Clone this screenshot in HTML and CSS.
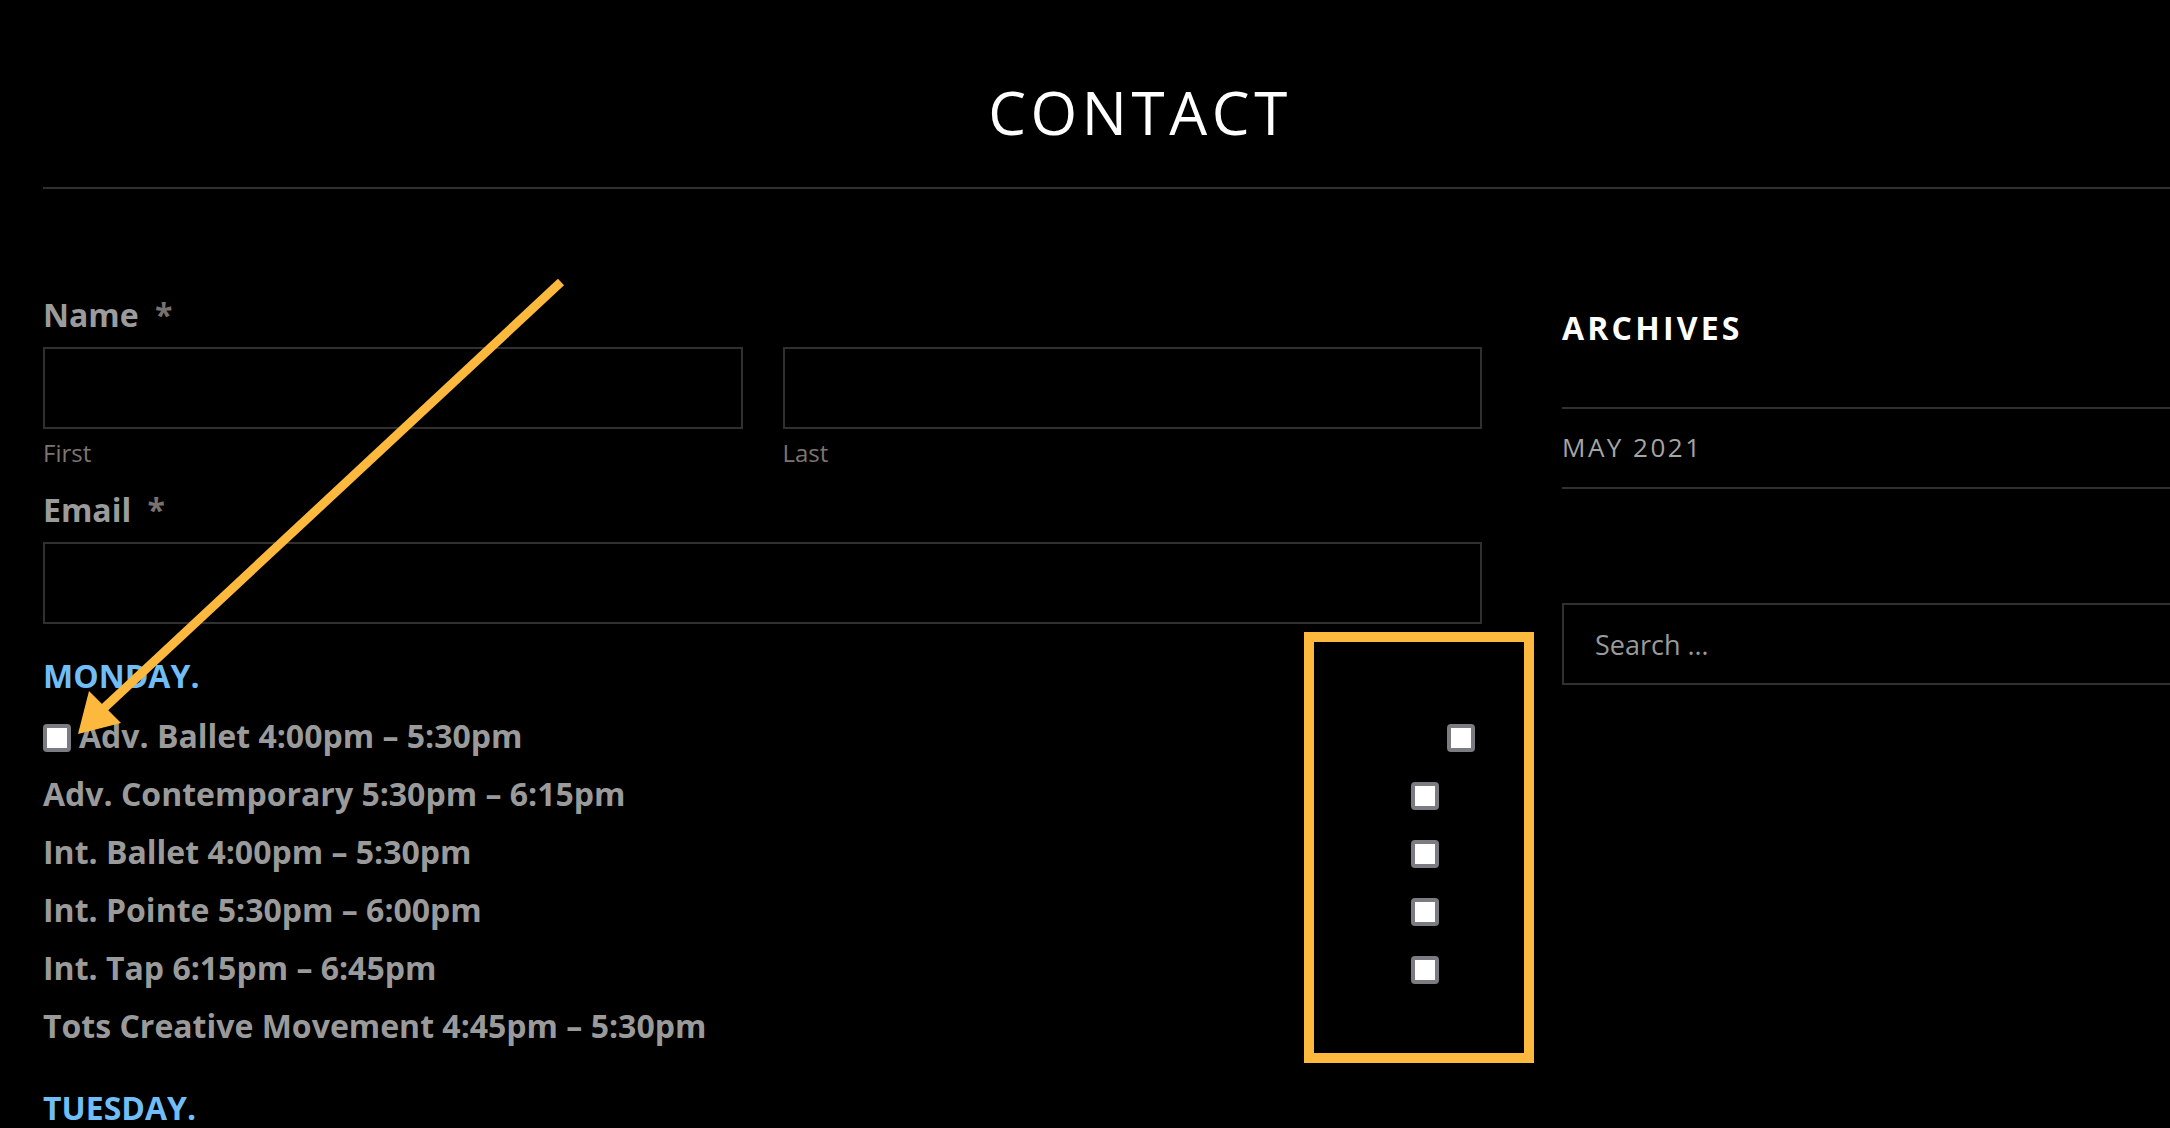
FILE: index.html
```html
<!DOCTYPE html>
<html lang="en">

<head>
    <meta http-equiv="Content-Type" content="text/html; charset=UTF-8" />
    <meta name="viewport" content="width=device-width, initial-scale=1.0">
    <title>Contact</title>
    <link rel="stylesheet" href="styles.css">
</head>

<body>
    <div class="site-page">
        <header class="entry-header">
            <h1 class="entry-title">Contact</h1>
        </header>

        <div class="content-area">
            <main class="primary">
                <form class="contact-form">
                    <div class="field">
                        <label class="field-label">Name <span class="required">*</span></label>
                        <div class="name-row">
                            <div class="name-part">
                                <input type="text" class="text-input" />
                                <span class="sublabel">First</span>
                            </div>
                            <div class="name-part">
                                <input type="text" class="text-input" />
                                <span class="sublabel">Last</span>
                            </div>
                        </div>
                    </div>

                    <div class="field field-email">
                        <label class="field-label">Email <span class="required">*</span></label>
                        <input type="email" class="text-input" />
                    </div>

                    <h3 class="day-title">MONDAY.</h3>
                    <ul class="class-list">
                        <li class="class-item">
                            <label class="class-label"><input type="checkbox" class="check" /> Adv. Ballet 4:00pm &ndash; 5:30pm</label>
                            <input type="checkbox" class="check stray-check stray-far" />
                        </li>
                        <li class="class-item">
                            <label class="class-label">Adv. Contemporary 5:30pm &ndash; 6:15pm</label>
                            <input type="checkbox" class="check stray-check" />
                        </li>
                        <li class="class-item">
                            <label class="class-label">Int. Ballet 4:00pm &ndash; 5:30pm</label>
                            <input type="checkbox" class="check stray-check" />
                        </li>
                        <li class="class-item">
                            <label class="class-label">Int. Pointe 5:30pm &ndash; 6:00pm</label>
                            <input type="checkbox" class="check stray-check" />
                        </li>
                        <li class="class-item">
                            <label class="class-label">Int. Tap 6:15pm &ndash; 6:45pm</label>
                            <input type="checkbox" class="check stray-check" />
                        </li>
                        <li class="class-item">
                            <label class="class-label">Tots Creative Movement 4:45pm &ndash; 5:30pm</label>
                        </li>
                    </ul>

                    <h3 class="day-title day-next">TUESDAY.</h3>
                </form>
            </main>

            <aside class="sidebar">
                <section class="widget">
                    <h2 class="widget-title">Archives</h2>
                    <ul class="archive-list">
                        <li class="archive-item">May 2021</li>
                    </ul>
                </section>

                <section class="widget widget-search">
                    <input type="text" class="search-field" placeholder="Search &hellip;" />
                </section>
            </aside>
        </div>
    </div>

    <!-- annotation drawn over the page -->
    <svg class="annotation" width="2170" height="1128" viewBox="0 0 2170 1128">
        <rect x="1309" y="637" width="220" height="421" fill="none" stroke="#fdb93e" stroke-width="10" />
        <line x1="561" y1="282" x2="103" y2="709" stroke="#fdb93e" stroke-width="9" />
        <polygon points="78,734 89,691 121,723" fill="#fdb93e" />
    </svg>
</body>

</html>
```

FILE: styles.css
```css
body {
    background-color: #000000;
    font-family: 'Open Sans', 'Liberation Sans', sans-serif;
    margin: 0;
    padding: 0;
    color: #9a9a9a;
    overflow: hidden;
    position: relative;
    min-height: 1128px;
}

.site-page {
    margin-left: 43px;
    width: 2194px;
}

.entry-header {
    padding: 76px 0 39px;
    border-bottom: 2px solid #303030;
}

.entry-title {
    margin: 0;
    text-align: center;
    color: #ffffff;
    font-size: 60px;
    line-height: 72px;
    font-weight: 400;
    letter-spacing: 4.6px;
    text-transform: uppercase;
}

.content-area {
    display: flex;
    gap: 80px;
}

.primary {
    width: 1439px;
    flex: none;
}

.sidebar {
    flex: 1;
}

/* form */

.field {
    margin-top: 106px;
}

.field-email {
    margin-top: 22px;
}

.field-label {
    display: block;
    font-size: 32px;
    line-height: 40px;
    font-weight: 700;
    color: #9b9b9b;
    margin-bottom: 12px;
}

.required {
    color: #7a716e;
    margin-left: 8px;
}

.name-row {
    display: grid;
    grid-template-columns: 1fr 1fr;
    gap: 40px;
}

.name-part {
    display: flex;
    flex-direction: column;
}

.text-input {
    display: block;
    box-sizing: border-box;
    width: 100%;
    height: 82px;
    margin: 0;
    background: #000000;
    border: 2px solid #303030;
    border-radius: 0;
    outline: none;
}

.sublabel {
    margin-top: 9px;
    font-size: 24px;
    line-height: 30px;
    color: #7d7572;
}

.day-title {
    margin: 32px 0 0;
    font-size: 32px;
    line-height: 40px;
    font-weight: 700;
    color: #70bdf7;
}

.day-next {
    margin-top: 33px;
}

.class-list {
    list-style: none;
    margin: 10.5px 0 0;
    padding: 0;
}

.class-item {
    display: flex;
    justify-content: space-between;
    align-items: center;
    height: 58.1px;
}

.class-label {
    display: flex;
    align-items: center;
    gap: 8px;
    font-size: 32px;
    line-height: 58.1px;
    font-weight: 700;
    color: #9a9a9a;
    white-space: nowrap;
}

.check {
    -webkit-appearance: none;
    appearance: none;
    box-sizing: border-box;
    width: 28px;
    height: 28px;
    margin: 4px 0 0;
    background: #ffffff;
    border: 4px solid #7b7c82;
    border-radius: 4px;
    flex: none;
}

.stray-check {
    margin-right: 43px;
}

.stray-far {
    margin-right: 7px;
}

/* sidebar */

.widget-title {
    margin: 119px 0 0;
    color: #ffffff;
    font-size: 32px;
    line-height: 40px;
    font-weight: 700;
    letter-spacing: 3.2px;
    text-transform: uppercase;
}

.archive-list {
    list-style: none;
    margin: 59px 0 0;
    padding: 0;
    border-top: 2px solid #303030;
}

.archive-item {
    font-size: 26px;
    line-height: 76px;
    padding-bottom: 2px;
    letter-spacing: 2.5px;
    text-transform: uppercase;
    color: #a5a5a5;
    border-bottom: 2px solid #303030;
}

.widget-search {
    margin-top: 114px;
}

.search-field {
    display: block;
    box-sizing: border-box;
    width: 100%;
    height: 82px;
    margin: 0;
    padding: 0 31px;
    background: #000000;
    border: 2px solid #303030;
    border-radius: 0;
    outline: none;
    font-family: 'Open Sans', 'Liberation Sans', sans-serif;
    font-size: 27px;
    color: #9a9a9a;
}

.search-field::placeholder {
    color: #9a9a9a;
}

.annotation {
    position: absolute;
    top: 0;
    left: 0;
    pointer-events: none;
}
```
